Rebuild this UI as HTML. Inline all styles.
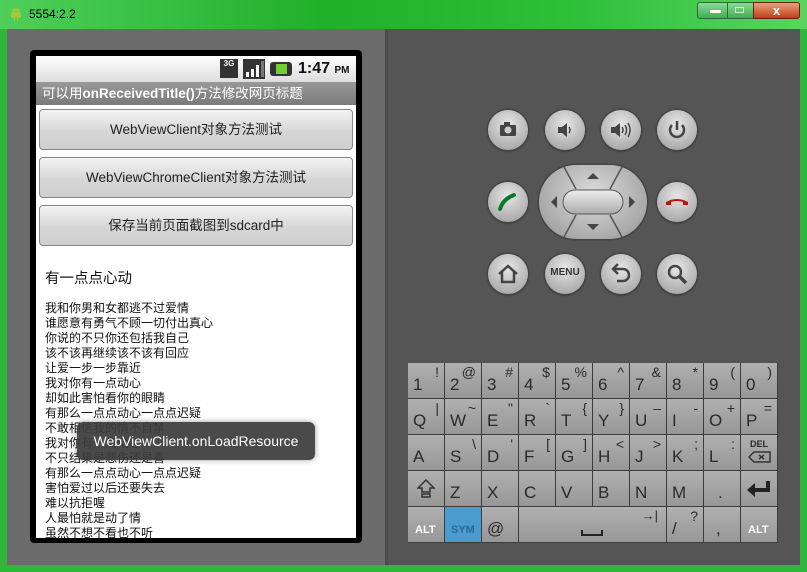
<!DOCTYPE html>
<html><head><meta charset="utf-8"><style>
*{margin:0;padding:0;box-sizing:border-box}
body{width:807px;height:572px;overflow:hidden;background:#2db83a;font-family:"Liberation Sans","Noto Sans CJK SC",sans-serif;position:relative}
.abs{position:absolute}
#title{left:0;top:0;width:807px;height:29px;background:linear-gradient(90deg,#4fcf5a,#20b02a 40%,#2cbf38 70%,#58d462);}
#left{left:7px;top:29px;width:381px;height:536px;background:#6b6b6b;border-right:3px solid #4a4a4a}
#right{left:388px;top:29px;width:412px;height:536px;background:#555}
#bezel{left:30px;top:50px;width:332px;height:493px;background:#000;border-radius:4px}
#screen{left:36px;top:56px;width:320px;height:482px;background:#fff;overflow:hidden}
.btn{position:absolute;left:3px;width:314px;height:41px;border:1px solid #888;border-radius:4px;background:linear-gradient(#f4f4f4,#d6d6d6 55%,#cfcfcf);font-size:13.5px;color:#222;text-align:center;line-height:40px}
.lyr{position:absolute;left:9px;top:245px;font-size:12px;line-height:15px;color:#111;white-space:pre}
.rb{position:absolute;width:40px;height:40px;border-radius:50%;background:radial-gradient(circle at 50% 35%,#e6e6e6,#b8b8b8 60%,#999);box-shadow:0 0 0 1.5px #444,0 1px 2px #222}
.rb svg{position:absolute;left:0;top:0}
#kb{left:408px;top:363px;width:370px;height:180px;background:#3c3c3c}
.k{position:absolute;width:36px;height:35px;background:linear-gradient(#b0b0b0,#979797);color:#2a2a2a;font-size:17px}
.k .m{position:absolute;left:5px;bottom:3px}
.k .s{position:absolute;right:5px;top:1px;font-size:14px}
</style></head><body>
<div id="title" class="abs"></div>
<svg class="abs" style="left:8px;top:6px" width="16" height="16" viewBox="0 0 16 16"><path d="M4 6h8v6H4z M3 7h1v4H3z M12 7h1v4h-1z M6 12h1v3H6z M9 12h1v3H9z M4 5.5a4 3.5 0 0 1 8 0z" fill="#a4c639"/></svg>
<div class="abs" style="left:29px;top:7px;font-size:12px;color:#000">5554:2.2</div>
<div class="abs" style="left:697px;top:2px;width:36px;height:17px;background:linear-gradient(#8fd79a,#3fae4e);border:1px solid #2a6a33;border-radius:3px 0 0 3px"></div>
<div class="abs" style="left:710px;top:10px;width:11px;height:3px;background:#fff"></div>
<div class="abs" style="left:727px;top:2px;width:27px;height:17px;background:linear-gradient(#8fd79a,#3fae4e);border:1px solid #2a6a33"></div>
<div class="abs" style="left:735px;top:7px;width:9px;height:6px;border:1px solid #d0f0d0"></div>
<div class="abs" style="left:753px;top:2px;width:47px;height:17px;background:linear-gradient(#e8a080,#c04018);border:1px solid #6a2010;border-radius:0 3px 3px 0;color:#fff;font-weight:bold;font-size:13px;text-align:center;line-height:15px">x</div>
<div id="left" class="abs"></div>
<div id="right" class="abs"></div>
<div id="bezel" class="abs"></div>
<div id="screen" class="abs">
 <div class="abs" style="left:0;top:0;width:320px;height:26px;background:linear-gradient(#fff,#ddd)"></div>
 <div class="abs" style="left:184px;top:3px;width:18px;height:19px;background:#333;color:#fff;font-size:8px;font-weight:bold;text-align:center">3G</div>
 <svg class="abs" style="left:207px;top:3px" width="22" height="20"><rect x="0" y="0" width="22" height="20" fill="#333"/><rect x="3" y="13" width="3" height="5" fill="#fff"/><rect x="8" y="10" width="3" height="8" fill="#fff"/><rect x="13" y="6" width="3" height="12" fill="#fff"/><rect x="18" y="2" width="3" height="16" fill="#777"/></svg>
 <div class="abs" style="left:234px;top:6px;width:22px;height:14px;background:#333;border-radius:3px"></div>
 <div class="abs" style="left:240px;top:8px;width:11px;height:10px;background:#7c3;"></div>
 <div class="abs" style="left:262px;top:4px;font-size:16px;font-weight:bold;color:#111">1:47 <span style="font-size:10px">PM</span></div>
 <div class="abs" style="left:0;top:26px;width:320px;height:23px;background:linear-gradient(#999,#7a7a7a);color:#fff;font-size:13.5px;line-height:23px;padding-left:6px">可以用<b>onReceivedTitle()</b>方法修改网页标题</div>
 <div class="btn" style="top:53px">WebViewClient对象方法测试</div>
 <div class="btn" style="top:101px">WebViewChromeClient对象方法测试</div>
 <div class="btn" style="top:149px">保存当前页面截图到sdcard中</div>
 <div class="abs" style="left:9px;top:211px;font-size:14.5px;color:#111">有一点点心动</div>
 <div class="lyr">我和你男和女都逃不过爱情
谁愿意有勇气不顾一切付出真心
你说的不只你还包括我自己
该不该再继续该不该有回应
让爱一步一步靠近
我对你有一点动心
却如此害怕看你的眼睛
有那么一点点动心一点点迟疑
不敢相信我的情不自禁
我对你有一点动心
不只结果是悲伤还是喜
有那么一点点动心一点点迟疑
害怕爱过以后还要失去
难以抗拒喔
人最怕就是动了情
虽然不想不看也不听</div>
 <div class="abs" style="left:41px;top:366px;width:238px;height:38px;background:rgba(60,60,60,.93);border-radius:6px;box-shadow:0 0 6px rgba(0,0,0,.4);color:#fff;font-size:14px;line-height:38px;text-align:center">WebViewClient.onLoadResource</div>
</div>

<div class="rb" style="left:488px;top:110px"><svg width="40" height="40"><rect x="12" y="15" width="16" height="11" rx="1" fill="#444"/><rect x="16" y="12" width="6" height="4" fill="#444"/><circle cx="20" cy="20" r="3.5" fill="#ccc"/></svg></div>
<div class="rb" style="left:545px;top:110px"><svg width="40" height="40"><path d="M13 17h4l5-4v14l-5-4h-4z" fill="#444"/><path d="M24 17q2 3 0 6" stroke="#444" stroke-width="1.5" fill="none"/></svg></div>
<div class="rb" style="left:601px;top:110px"><svg width="40" height="40"><path d="M10 17h4l5-4v14l-5-4h-4z" fill="#444"/><path d="M21 17q2 3 0 6M24 15q3 5 0 10M27 13q4 7 0 14" stroke="#444" stroke-width="1.5" fill="none"/></svg></div>
<div class="rb" style="left:657px;top:110px"><svg width="40" height="40"><path d="M15 15a7 7 0 1 0 10 0" stroke="#444" stroke-width="2.5" fill="none"/><path d="M20 11v9" stroke="#444" stroke-width="2.5"/></svg></div>
<div class="rb" style="left:488px;top:182px"><svg width="40" height="40"><path d="M12 27q3-10 14-14" stroke="#0a7a2a" stroke-width="4" fill="none" stroke-linecap="round"/></svg></div>
<div class="rb" style="left:657px;top:182px"><svg width="40" height="40"><path d="M9 23v-3q11-6 22 0v3h-5v-3q-6-2-12 0v3z" fill="#c01010"/></svg></div>
<div class="abs" style="left:539px;top:165px;width:108px;height:74px;border-radius:40px;background:radial-gradient(ellipse at 50% 40%,#dcdcdc,#aaa 70%,#8a8a8a);box-shadow:0 0 0 1.5px #444"></div>
<svg class="abs" style="left:539px;top:165px" width="108" height="74"><path d="M25 2l12 22M83 2l-12 22M25 72l12-22M83 72l-12-22" stroke="#555" stroke-width="1.5"/><path d="M48 14h12l-6-6z M48 59h12l-6 6z M12 37l6-6v12z M96 37l-6-6v12z" fill="#444"/><rect x="24" y="25" width="60" height="24" rx="12" fill="url(#g)" stroke="#555"/><defs><linearGradient id="g" x1="0" y1="0" x2="0" y2="1"><stop offset="0" stop-color="#eee"/><stop offset="1" stop-color="#aaa"/></linearGradient></defs></svg>
<div class="rb" style="left:488px;top:254px"><svg width="40" height="40"><path d="M11 20l9-8 9 8M14 18v10h12v-10" stroke="#444" stroke-width="2.5" fill="none"/></svg></div>
<div class="rb" style="left:545px;top:254px"><div style="position:absolute;width:40px;top:13px;text-align:center;font-size:10px;font-weight:bold;color:#333">MENU</div></div>
<div class="rb" style="left:601px;top:254px"><svg width="40" height="40"><path d="M14 15h8a6 6 0 0 1 0 12h-6" stroke="#444" stroke-width="2.5" fill="none"/><path d="M17 10l-5 5 5 5" stroke="#444" stroke-width="2.5" fill="none"/></svg></div>
<div class="rb" style="left:657px;top:254px"><svg width="40" height="40"><circle cx="18" cy="18" r="6" stroke="#444" stroke-width="2.5" fill="none"/><path d="M22 22l7 7" stroke="#444" stroke-width="3.5"/></svg></div>

<div id="kb" class="abs">
<div class="k" style="left:0;top:0"><span class="m">1</span><span class="s">!</span></div>
<div class="k" style="left:37px;top:0"><span class="m">2</span><span class="s">@</span></div>
<div class="k" style="left:74px;top:0"><span class="m">3</span><span class="s">#</span></div>
<div class="k" style="left:111px;top:0"><span class="m">4</span><span class="s">$</span></div>
<div class="k" style="left:148px;top:0"><span class="m">5</span><span class="s">%</span></div>
<div class="k" style="left:185px;top:0"><span class="m">6</span><span class="s">^</span></div>
<div class="k" style="left:222px;top:0"><span class="m">7</span><span class="s">&amp;</span></div>
<div class="k" style="left:259px;top:0"><span class="m">8</span><span class="s">*</span></div>
<div class="k" style="left:296px;top:0"><span class="m">9</span><span class="s">(</span></div>
<div class="k" style="left:333px;top:0"><span class="m">0</span><span class="s">)</span></div>
<div class="k" style="left:0;top:36px"><span class="m">Q</span><span class="s">|</span></div>
<div class="k" style="left:37px;top:36px"><span class="m">W</span><span class="s">~</span></div>
<div class="k" style="left:74px;top:36px"><span class="m">E</span><span class="s">"</span></div>
<div class="k" style="left:111px;top:36px"><span class="m">R</span><span class="s">`</span></div>
<div class="k" style="left:148px;top:36px"><span class="m">T</span><span class="s">{</span></div>
<div class="k" style="left:185px;top:36px"><span class="m">Y</span><span class="s">}</span></div>
<div class="k" style="left:222px;top:36px"><span class="m">U</span><span class="s">–</span></div>
<div class="k" style="left:259px;top:36px"><span class="m">I</span><span class="s">-</span></div>
<div class="k" style="left:296px;top:36px"><span class="m">O</span><span class="s">+</span></div>
<div class="k" style="left:333px;top:36px"><span class="m">P</span><span class="s">=</span></div>
<div class="k" style="left:0;top:72px"><span class="m">A</span></div>
<div class="k" style="left:37px;top:72px"><span class="m">S</span><span class="s">\</span></div>
<div class="k" style="left:74px;top:72px"><span class="m">D</span><span class="s">'</span></div>
<div class="k" style="left:111px;top:72px"><span class="m">F</span><span class="s">[</span></div>
<div class="k" style="left:148px;top:72px"><span class="m">G</span><span class="s">]</span></div>
<div class="k" style="left:185px;top:72px"><span class="m">H</span><span class="s">&lt;</span></div>
<div class="k" style="left:222px;top:72px"><span class="m">J</span><span class="s">&gt;</span></div>
<div class="k" style="left:259px;top:72px"><span class="m">K</span><span class="s">;</span></div>
<div class="k" style="left:296px;top:72px"><span class="m">L</span><span class="s">:</span></div>
<div class="k" style="left:333px;top:72px"><span style="position:absolute;left:9px;top:4px;font-size:9px;font-weight:bold">DEL</span><svg style="position:absolute;left:7px;top:16px" width="24" height="12"><path d="M6 1h16v10H6L1 6z" stroke="#333" stroke-width="1.5" fill="none"/><path d="M11 4l5 4M16 4l-5 4" stroke="#333" stroke-width="1.5"/></svg></div>
<div class="k" style="left:0;top:108px"><svg style="position:absolute;left:9px;top:8px" width="18" height="20"><path d="M9 1l8 8h-4v4H5V9H1z M5 15h8v3H5z" stroke="#333" stroke-width="1.5" fill="none"/></svg></div>
<div class="k" style="left:37px;top:108px"><span class="m">Z</span></div>
<div class="k" style="left:74px;top:108px"><span class="m">X</span></div>
<div class="k" style="left:111px;top:108px"><span class="m">C</span></div>
<div class="k" style="left:148px;top:108px"><span class="m">V</span></div>
<div class="k" style="left:185px;top:108px"><span class="m">B</span></div>
<div class="k" style="left:222px;top:108px"><span class="m">N</span></div>
<div class="k" style="left:259px;top:108px"><span class="m">M</span></div>
<div class="k" style="left:296px;top:108px"><span class="m" style="left:14px">.</span></div>
<div class="k" style="left:333px;top:108px"><svg style="position:absolute;left:5px;top:9px" width="26" height="18"><path d="M22 1v9H7" stroke="#222" stroke-width="4" fill="none"/><path d="M1 10l8-7v14z" fill="#222"/></svg></div>
<div class="k" style="left:0;top:144px"><span style="position:absolute;left:7px;bottom:6px;font-size:11px;font-weight:bold;color:#fff">ALT</span></div>
<div class="k" style="left:37px;top:144px;background:#4a9cd0"><span style="position:absolute;left:6px;bottom:6px;font-size:11px;font-weight:bold;color:#2a6a96">SYM</span></div>
<div class="k" style="left:74px;top:144px"><span class="m">@</span></div>
<div class="k" style="left:111px;top:144px;width:147px"><span style="position:absolute;right:8px;top:1px;font-size:13px">→|</span><svg style="position:absolute;left:62px;top:22px" width="22" height="8"><path d="M1 1v5h20V1" stroke="#222" stroke-width="2" fill="none"/></svg></div>
<div class="k" style="left:259px;top:144px"><span class="m">/</span><span class="s">?</span></div>
<div class="k" style="left:296px;top:144px"><span class="m" style="left:12px">,</span></div>
<div class="k" style="left:333px;top:144px"><span style="position:absolute;left:7px;bottom:6px;font-size:11px;font-weight:bold;color:#fff">ALT</span></div>
</div>
</body></html>
